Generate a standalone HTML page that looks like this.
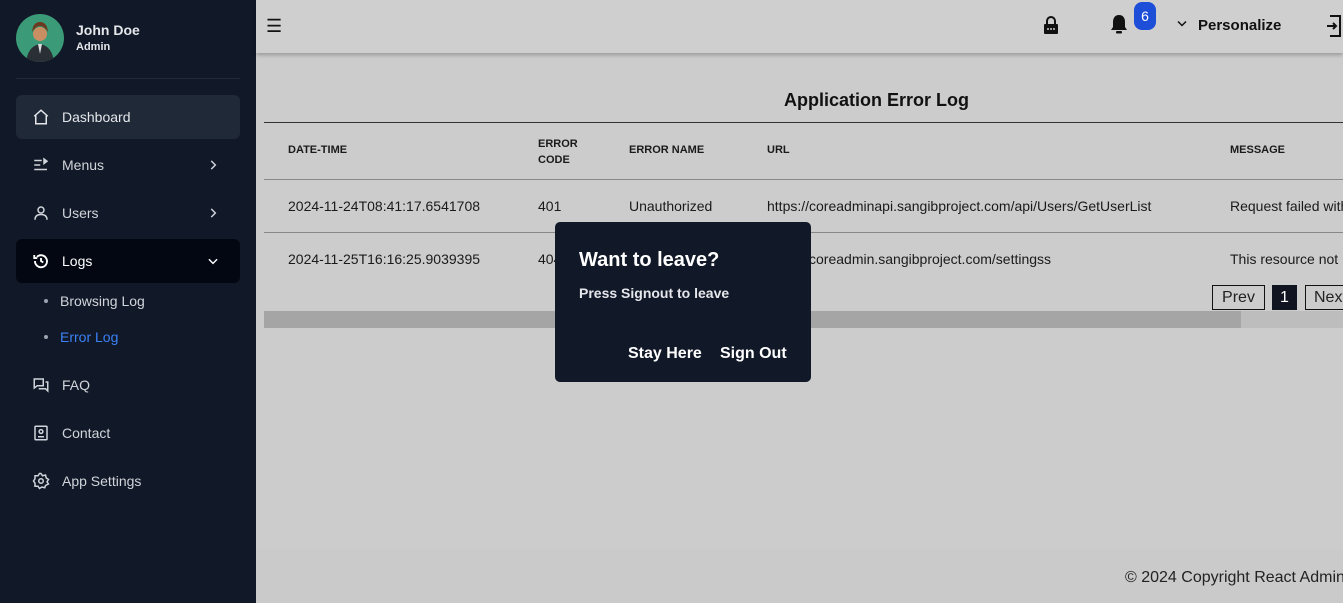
<!DOCTYPE html>
<html><head><style>
*{box-sizing:border-box;margin:0;padding:0}
body{width:1343px;height:603px;overflow:hidden;font-family:"Liberation Sans",sans-serif;background:#cccccc;position:relative}
.sb{position:absolute;left:0;top:0;width:256px;height:603px;background:#111827;color:#d1d5db}
.av{position:absolute;left:16px;top:14px;width:48px;height:48px;border-radius:50%;background:#3b9a78;overflow:hidden}
.name{position:absolute;left:76px;top:22px;color:#e5e7eb;font-weight:bold;font-size:14px}
.role{position:absolute;left:76px;top:41px;color:#e5e7eb;font-weight:bold;font-size:11px}
.hr{position:absolute;left:16px;top:78px;width:224px;height:1px;background:#1f2937}
.it{position:absolute;left:16px;width:224px;height:44px;border-radius:6px;font-size:14px;color:#d1d5db}
.it span.t{position:absolute;left:46px;top:14px}
.it svg{position:absolute;left:16px;top:13px}
.it .ch{position:absolute;right:20px;top:15px;left:auto}
.sub{position:absolute;left:60px;font-size:14px;color:#d1d5db}
.dot{position:absolute;left:44px;width:4px;height:4px;border-radius:50%;background:#9ca3af}
.hd{position:absolute;left:256px;top:0;right:0;height:53px;background:#cfcfcf;box-shadow:0 2px 4px rgba(0,0,0,.25)}
.main{position:absolute;left:256px;top:53px;right:0;color:#111}
.row{position:absolute;font-size:14px;color:#1a1a1a}
</style></head><body>
<div class="sb">
 <div class="av"><svg width="48" height="48"><circle cx="24" cy="20" r="7" fill="#c98f63"/><path d="M16 18 Q17 8 24 8 Q31 8 32 18 Q28 12 24 12 Q20 12 16 18Z" fill="#6b3a1e"/><path d="M10 48 Q12 32 24 30 Q36 32 38 48Z" fill="#2a2f36"/><path d="M22 30 L24 40 L26 30Z" fill="#ddd"/></svg></div>
 <div class="name">John Doe</div><div class="role">Admin</div>
 <div class="hr"></div>
 <div class="it" style="top:95px;background:#1f2937"><svg width="18" height="18" viewBox="0 0 24 24" fill="none" stroke="#e5e7eb" stroke-width="2"><path d="M3 11 L12 3 L21 11 M5 10 V21 H19 V10"/></svg><span class="t" style="color:#e5e7eb">Dashboard</span></div>
 <div class="it" style="top:143px"><svg width="18" height="18" viewBox="0 0 24 24" fill="none" stroke="#d1d5db" stroke-width="2"><path d="M3 6H13M3 12H11M3 18H20"/><path d="M16 4 L20 7 L16 10Z" fill="#d1d5db"/></svg><span class="t">Menus</span><svg class="ch" width="14" height="14" viewBox="0 0 24 24" fill="none" stroke="#d1d5db" stroke-width="2.5"><path d="M9 5l7 7-7 7"/></svg></div>
 <div class="it" style="top:191px"><svg width="18" height="18" viewBox="0 0 24 24" fill="none" stroke="#d1d5db" stroke-width="2"><circle cx="12" cy="8" r="4"/><path d="M4 21 Q4 14 12 14 Q20 14 20 21"/></svg><span class="t">Users</span><svg class="ch" width="14" height="14" viewBox="0 0 24 24" fill="none" stroke="#d1d5db" stroke-width="2.5"><path d="M9 5l7 7-7 7"/></svg></div>
 <div class="it" style="top:239px;background:#030712"><svg width="18" height="18" viewBox="0 0 24 24" fill="none" stroke="#fff" stroke-width="2.5"><path d="M4 12 A8 8 0 1 0 6.5 6.5 M3 4 V8 H7 M12 8 V12 L15 14"/></svg><span class="t" style="color:#fff">Logs</span><svg class="ch" width="14" height="14" viewBox="0 0 24 24" fill="none" stroke="#fff" stroke-width="2.5"><path d="M5 9l7 7 7-7"/></svg></div>
 <div class="dot" style="top:299px"></div><div class="sub" style="top:293px">Browsing Log</div>
 <div class="dot" style="top:335px"></div><div class="sub" style="top:329px;color:#3b82f6">Error Log</div>
 <div class="it" style="top:363px"><svg width="18" height="18" viewBox="0 0 24 24" fill="none" stroke="#d1d5db" stroke-width="2"><path d="M3 4H15V13H7L3 16Z M18 8H21V20L18 17H9"/></svg><span class="t">FAQ</span></div>
 <div class="it" style="top:411px"><svg width="18" height="18" viewBox="0 0 24 24" fill="none" stroke="#d1d5db" stroke-width="2"><rect x="4" y="3" width="16" height="18" rx="1"/><circle cx="12" cy="10" r="2.5"/><path d="M8 17H16"/></svg><span class="t">Contact</span></div>
 <div class="it" style="top:459px"><svg width="18" height="18" viewBox="0 0 24 24" fill="none" stroke="#d1d5db" stroke-width="2"><circle cx="12" cy="12" r="3"/><path d="M12 2 L14 5 L18 4 L19 8 L22 10 L20 13 L22 16 L18 18 L17 21 L13 20 L10 22 L8 19 L4 19 L4 15 L2 12 L4 9 L4 5 L8 5 L10 2Z"/></svg><span class="t">App Settings</span></div>
</div>
<div class="hd">
 <div style="position:absolute;left:10px;top:17px;font-size:18px;color:#111;line-height:18px">☰</div>
 <svg style="position:absolute;left:787px;top:16px" width="16" height="18" viewBox="0 0 16 18"><path d="M4 8V5a4 4 0 0 1 8 0v3" fill="none" stroke="#111" stroke-width="2"/><rect x="1" y="8" width="14" height="10" rx="1" fill="#111"/><circle cx="5" cy="13" r="1" fill="#ccc"/><circle cx="8" cy="13" r="1" fill="#ccc"/><circle cx="11" cy="13" r="1" fill="#ccc"/></svg>
 <svg style="position:absolute;left:854px;top:14px" width="18" height="20" viewBox="0 0 18 20"><path d="M9 1C5 1 3 4 3 8v5l-2 3h16l-2-3V8c0-4-2-7-6-7z" fill="#111"/><rect x="6" y="17" width="6" height="2.5" rx="1" fill="#111"/></svg>
 <div style="position:absolute;left:878px;top:2px;width:22px;height:28px;border-radius:8px;background:#1d4ed8;color:#fff;font-size:14px;text-align:center;line-height:28px">6</div>
 <svg style="position:absolute;left:920px;top:19px" width="12" height="10" viewBox="0 0 24 20"><path d="M4 5l8 8 8-8" fill="none" stroke="#111" stroke-width="3"/></svg>
 <div style="position:absolute;left:942px;top:17px;font-size:15px;color:#111;font-weight:bold">Personalize</div>
 <svg style="position:absolute;left:1070px;top:15px" width="16" height="22" viewBox="0 0 16 22"><path d="M4 1H14V21H4M1 11H10M7 8l3 3-3 3" fill="none" stroke="#111" stroke-width="2"/></svg>
</div>
<div class="main">
 <div style="position:absolute;left:0;width:1241px;top:37px;text-align:center;font-size:18px;font-weight:bold;color:#111">Application Error Log</div>
 <div style="position:absolute;left:8px;right:0;top:69px;height:1px;background:#333"></div>
 <div class="row" style="left:32px;top:91px;font-size:11px;font-weight:bold">DATE-TIME</div>
 <div class="row" style="left:282px;top:83px;font-size:11px;font-weight:bold;line-height:16px">ERROR<br>CODE</div>
 <div class="row" style="left:373px;top:91px;font-size:11px;font-weight:bold">ERROR NAME</div>
 <div class="row" style="left:511px;top:91px;font-size:11px;font-weight:bold">URL</div>
 <div class="row" style="left:974px;top:91px;font-size:11px;font-weight:bold">MESSAGE</div>
 <div style="position:absolute;left:8px;right:0;top:126px;height:1px;background:#888"></div>
 <div class="row" style="left:32px;top:145px">2024-11-24T08:41:17.6541708</div>
 <div class="row" style="left:282px;top:145px">401</div>
 <div class="row" style="left:373px;top:145px">Unauthorized</div>
 <div class="row" style="left:511px;top:145px">https://coreadminapi.sangibproject.com/api/Users/GetUserList</div>
 <div class="row" style="left:974px;top:145px;white-space:nowrap">Request failed with</div>
 <div style="position:absolute;left:8px;right:0;top:179px;height:1px;background:#888"></div>
 <div class="row" style="left:32px;top:198px">2024-11-25T16:16:25.9039395</div>
 <div class="row" style="left:282px;top:198px">404</div>
 <div class="row" style="left:511px;top:198px">https://coreadmin.sangibproject.com/settingss</div>
 <div class="row" style="left:974px;top:198px;white-space:nowrap">This resource not</div>
 <div style="position:absolute;left:956px;top:232px;width:53px;height:25px;border:1px solid #111;font-size:16px;text-align:center;line-height:23px;color:#222">Prev</div>
 <div style="position:absolute;left:1016px;top:232px;width:25px;height:25px;background:#0f1420;color:#fff;font-size:16px;text-align:center;line-height:25px">1</div>
 <div style="position:absolute;left:1049px;top:232px;width:60px;height:25px;border:1px solid #111;font-size:16px;line-height:23px;padding-left:8px;color:#222">Next</div>
 <div style="position:absolute;left:8px;right:0;top:258px;height:17px;background:#bdbdbd"></div>
 <div style="position:absolute;left:8px;width:977px;top:258px;height:17px;background:#a5a5a5"></div>
 <div style="position:absolute;left:0;right:0;top:496px;height:54px;background:#cacaca"></div>
 <div style="position:absolute;left:869px;top:516px;font-size:16px;color:#222;white-space:nowrap">© 2024 Copyright React Admin</div>
</div>
<div style="position:absolute;left:555px;top:222px;width:256px;height:160px;background:#111827;border-radius:5px;color:#fff">
 <div style="position:absolute;left:24px;top:27px;font-size:20px;font-weight:bold">Want to leave?</div>
 <div style="position:absolute;left:24px;top:63px;font-size:14px;font-weight:bold;color:#e5e7eb">Press Signout to leave</div>
 <div style="position:absolute;left:73px;top:123px;font-size:16px;font-weight:bold">Stay Here</div>
 <div style="position:absolute;left:165px;top:123px;font-size:16px;font-weight:bold">Sign Out</div>
</div>
</body></html>
